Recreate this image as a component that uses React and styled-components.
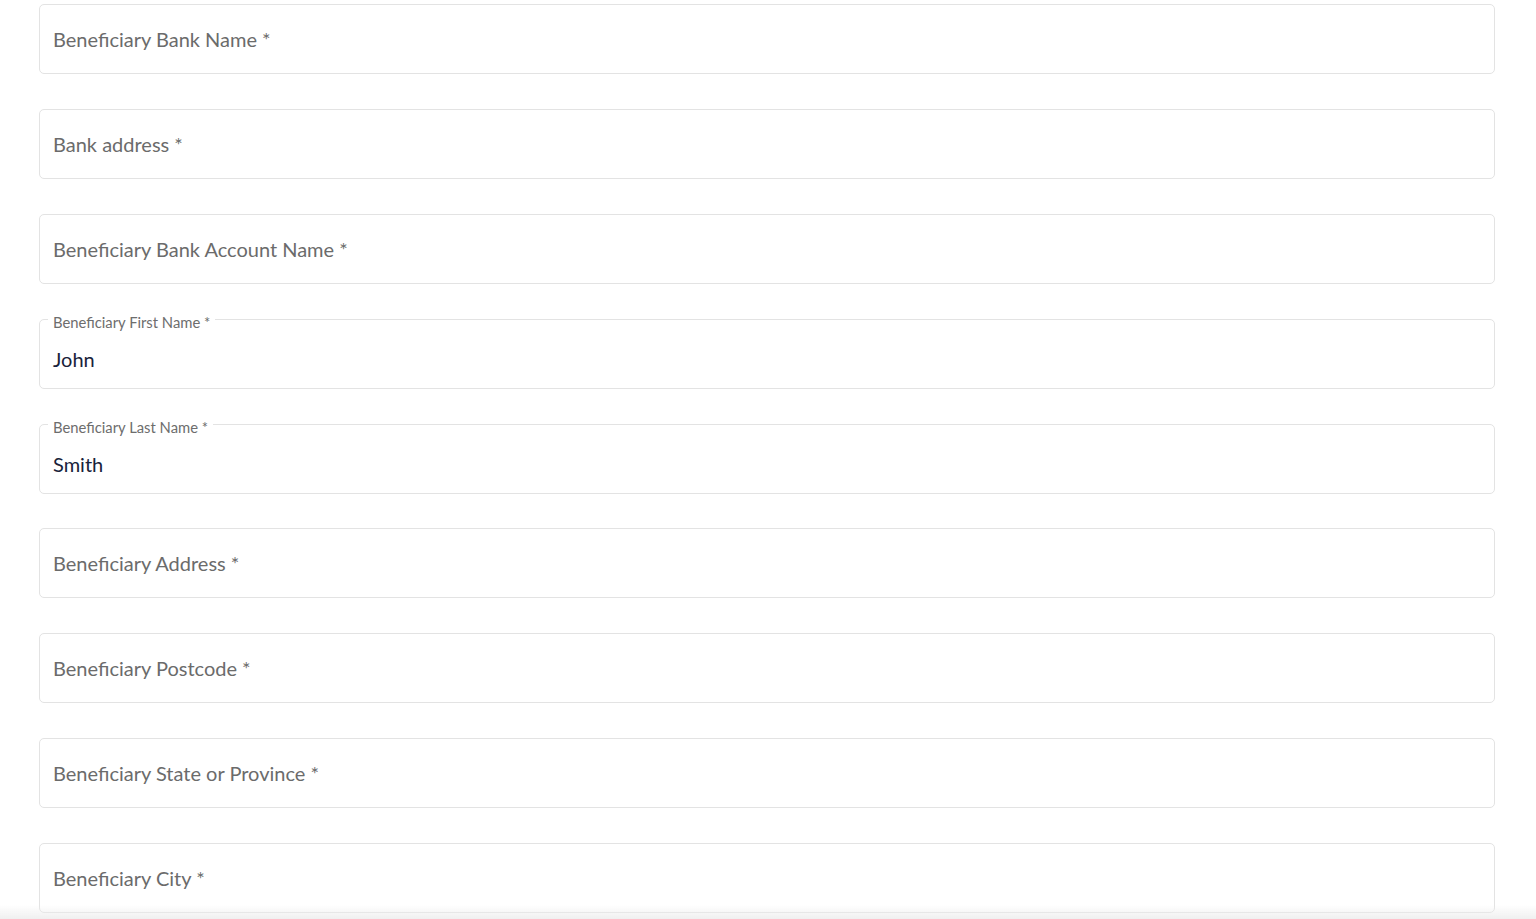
import React from "react";
import styled, { createGlobalStyle } from "styled-components";

const GlobalStyle = createGlobalStyle`
  html, body {
    margin: 0;
    padding: 0;
    background: #ffffff;
    font-family: Lato, "Noto Sans", sans-serif;
  }
`;

const fields = [
  { label: "Beneficiary Bank Name *" },
  { label: "Bank address *" },
  { label: "Beneficiary Bank Account Name *" },
  { label: "Beneficiary First Name *", value: "John" },
  { label: "Beneficiary Last Name *", value: "Smith" },
  { label: "Beneficiary Address *" },
  { label: "Beneficiary Postcode *" },
  { label: "Beneficiary State or Province *" },
  { label: "Beneficiary City *" },
];

function Field({ label, value }) {
  const filled = Boolean(value);
  return (
    <FieldBox>
      {filled && <FloatLabel>{label}</FloatLabel>}
      <Input $filled={filled}>{filled ? value : <Placeholder>{label}</Placeholder>}</Input>
    </FieldBox>
  );
}

export default function App() {
  return (
    <>
      <GlobalStyle />
      <Form>
        {fields.map((f) => (
          <Field key={f.label} label={f.label} value={f.value} />
        ))}
      </Form>
      <BottomFade />
    </>
  );
}

const Form = styled.div`
  display: flex;
  flex-direction: column;
  gap: 34.9px;
  padding: 4px 41px 0 39px;
  height: 919px;
  box-sizing: border-box;
  overflow: hidden;
`;

const FieldBox = styled.div`
  position: relative;
  flex: 0 0 auto;
  height: 70px;
  box-sizing: border-box;
  border: 1px solid #e3e3e3;
  border-radius: 5px;
  display: flex;
  align-items: center;
  padding: 0 13px;
  background: #fff;
`;

const FloatLabel = styled.span`
  position: absolute;
  top: -6px;
  left: 8px;
  padding: 0 5px;
  background: #fff;
  font-size: 14.8px;
  line-height: 16px;
  color: #6d6d6d;
`;

const Input = styled.div`
  font-size: 20px;
  line-height: 24px;
  color: #18223a;
  padding-top: ${(p) => (p.$filled ? "10px" : "0")};
`;

const Placeholder = styled.span`
  color: #6b6b6b;
`;

const BottomFade = styled.div`
  position: fixed;
  left: 0;
  right: 0;
  bottom: 0;
  height: 14px;
  pointer-events: none;
  background: linear-gradient(to bottom, rgba(240, 240, 240, 0), rgba(236, 236, 236, 0.8));
`;
